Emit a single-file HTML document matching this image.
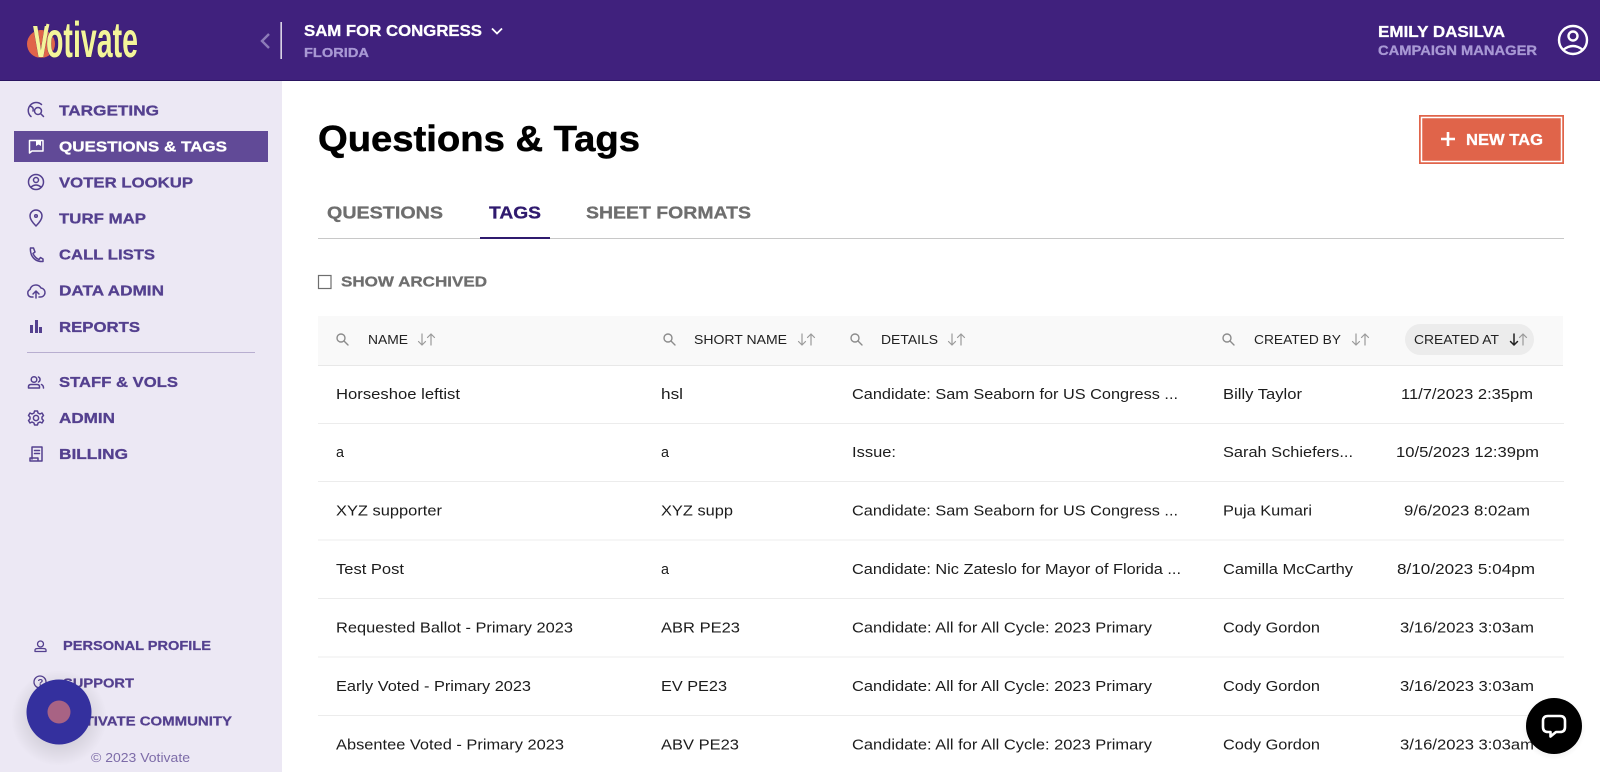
<!DOCTYPE html>
<html><head><meta charset="utf-8"><style>
html,body{margin:0;padding:0;width:1600px;height:772px;overflow:hidden;background:#fff}
svg{display:block}
text{font-family:"Liberation Sans",sans-serif;white-space:pre}
.n{font-size:15px;font-weight:700;fill:#54408f;stroke:#54408f;stroke-width:.3}
.f{font-size:13px;font-weight:700;fill:#54408f;stroke:#54408f;stroke-width:.25}
.t{font-size:15px;fill:#1c1c1c}
.h{font-size:13px;fill:#222}
.tab{font-size:17.5px;font-weight:700;fill:#6e6e6e;stroke:#6e6e6e;stroke-width:.3}
.ic{fill:none;stroke:#54408f;stroke-width:1.5;stroke-linecap:round;stroke-linejoin:round}
.s{fill:none;stroke:#8c8c8c;stroke-width:1.4;stroke-linecap:round}
.ar{fill:none;stroke:#9a9a9a;stroke-width:1.2;stroke-linecap:round;stroke-linejoin:round}
.l{stroke:#ececec;stroke-width:1}
</style></head><body>
<svg width="1600" height="772" viewBox="0 0 1600 772" xmlns="http://www.w3.org/2000/svg">
<defs><radialGradient id="g"><stop offset="55%" stop-color="#000" stop-opacity=".1"/><stop offset="100%" stop-color="#000" stop-opacity="0"/></radialGradient></defs>
<rect width="1600" height="772" fill="#fff"/>
<!-- sidebar -->
<rect x="0" y="80" width="282" height="692" fill="#ece8f4"/>
<!-- header -->
<rect width="1600" height="80" fill="#40217d"/>
<rect y="80" width="1600" height="1" fill="#2a1560"/>
<!-- logo -->
<circle cx="41" cy="44" r="14" fill="#e0644a"/>
<text x="33" y="57" font-size="58" font-weight="700" textLength="16" lengthAdjust="spacingAndGlyphs" style="fill:#f4f59a;stroke:#2a1560;stroke-width:.6;paint-order:stroke">v</text>
<path d="M46.500 30 L48 24" fill="none" stroke="#f4f59a" stroke-width="3"/>
<text x="46" y="57" font-size="50" font-weight="700" textLength="92" lengthAdjust="spacingAndGlyphs" style="fill:#f4f59a;stroke:#2a1560;stroke-width:.8;paint-order:stroke">otivate</text>
<!-- header left -->
<path d="M269 34 L262 41 L269 48" fill="none" stroke="#8d7bb8" stroke-width="2.400"/>
<rect x="280.500" y="22" width="1.300" height="37" fill="#fff"/>
<text x="304" y="36" font-size="15.500" font-weight="700" fill="#fff" stroke="#fff" stroke-width=".3" textLength="178" lengthAdjust="spacingAndGlyphs">SAM FOR CONGRESS</text>
<path d="M492 28.500 L497 33.500 L502 28.500" fill="none" stroke="#fff" stroke-width="1.800"/>
<text x="304" y="57" font-size="13" font-weight="700" fill="#a898d4" stroke="#a898d4" stroke-width=".3" textLength="65" lengthAdjust="spacingAndGlyphs">FLORIDA</text>
<!-- header right -->
<text x="1378" y="37" font-size="15.500" font-weight="700" fill="#fff" stroke="#fff" stroke-width=".3" textLength="127" lengthAdjust="spacingAndGlyphs">EMILY DASILVA</text>
<text x="1378" y="55" font-size="13.500" font-weight="700" fill="#a898d4" stroke="#a898d4" stroke-width=".3" textLength="159" lengthAdjust="spacingAndGlyphs">CAMPAIGN MANAGER</text>
<circle cx="1573" cy="40" r="14" fill="none" stroke="#fff" stroke-width="2.400"/>
<circle cx="1573" cy="36" r="4.500" fill="none" stroke="#fff" stroke-width="2.400"/>
<path d="M1563 50 Q1573 42 1583 50" fill="none" stroke="#fff" stroke-width="2.400"/>
<!-- nav -->
<rect x="14" y="131" width="254" height="31" fill="#614a97"/>
<g class="ic">
<path d="M41.500 104.500 A7.500 7.500 0 1 0 31 116.500 M30 106 Q34 107 33 111"/><circle cx="38" cy="111" r="3.500"/><path d="M40.500 113.500 L43.500 116.500"/>
<path d="M29.500 140.500 H43 V151 H32 L29.500 153 Z" style="stroke:#fff"/>
<circle cx="36" cy="182" r="7.500"/><circle cx="36" cy="180" r="2.500"/><path d="M31 187 Q36 183 41 187"/>
<path d="M36 226 Q30 220 30 216 A6 6 0 0 1 42 216 Q42 220 36 226 Z"/><circle cx="36" cy="216" r="1.300"/>
<path d="M30.500 248 L33.500 248 L35 252 L33 253.500 Q35 258 39 259.500 L40.500 257.500 L43 259 V261.500 Q35 262 31.500 255 Q30 251 30.500 248 Z"/>
<path d="M33 297 H31 A4 4 0 0 1 30 289.500 A6 6 0 0 1 41 288 A4.500 4.500 0 0 1 40 297 H39 M36 298 V291 M33 294 L36 291 L39 294"/>
<circle cx="34" cy="379.500" r="2.800"/><path d="M28.500 388 V386.500 Q28.500 384.500 31 384.500 H37 Q39.500 384.500 39.500 386.500 V388 Z M38.500 377 a2.800 2.800 0 0 1 0 5 M41.500 384.500 Q43.500 385.500 43.500 388"/>
<circle cx="36" cy="418" r="2.600"/><path d="M34.500 411 H37.500 L38 413 L40 414 L42 413 L43.500 415.500 L42 417 V419 L43.500 420.500 L42 423 L40 422 L38 423 L37.500 425 H34.500 L34 423 L32 422 L30 423 L28.500 420.500 L30 419 V417 L28.500 415.500 L30 413 L32 414 L34 413 Z"/>
<path d="M32 459 V447 H42 V461 H30 V458 H38 V461 M34.500 450.500 H39.500 M34.500 453.500 H39.500"/>
</g>
<path d="M36 140 H41 V146 L38.500 144.500 L36 146 Z" fill="#fff"/>
<rect x="30" y="325" width="3" height="8" fill="#54408f"/><rect x="35" y="320" width="3" height="13" fill="#54408f"/><rect x="39" y="327" width="3" height="6" fill="#54408f"/>
<text class="n" x="59" y="115.500" textLength="100" lengthAdjust="spacingAndGlyphs">TARGETING</text>
<text class="n" x="59" y="151.500" style="fill:#fff;stroke:#fff" textLength="168" lengthAdjust="spacingAndGlyphs">QUESTIONS &amp; TAGS</text>
<text class="n" x="59" y="187.500" textLength="134" lengthAdjust="spacingAndGlyphs">VOTER LOOKUP</text>
<text class="n" x="59" y="223.500" textLength="87" lengthAdjust="spacingAndGlyphs">TURF MAP</text>
<text class="n" x="59" y="259.500" textLength="96" lengthAdjust="spacingAndGlyphs">CALL LISTS</text>
<text class="n" x="59" y="295.500" textLength="105" lengthAdjust="spacingAndGlyphs">DATA ADMIN</text>
<text class="n" x="59" y="332" textLength="81" lengthAdjust="spacingAndGlyphs">REPORTS</text>
<rect x="27" y="352" width="228" height="1" fill="#b8aed0"/>
<text class="n" x="59" y="387" textLength="119" lengthAdjust="spacingAndGlyphs">STAFF &amp; VOLS</text>
<text class="n" x="59" y="423" textLength="56" lengthAdjust="spacingAndGlyphs">ADMIN</text>
<text class="n" x="59" y="459" textLength="69" lengthAdjust="spacingAndGlyphs">BILLING</text>
<!-- sidebar footer -->
<g class="ic" style="stroke-width:1.300"><circle cx="40.500" cy="644" r="3"/><path d="M35 651.500 V650 Q35 648.500 38 648.500 H43 Q46 648.500 46 650 V651.500 Z"/><circle cx="40" cy="682" r="6"/></g>
<text x="37.500" y="685.500" font-size="9.500" font-weight="700" fill="#54408f">?</text>
<text class="f" x="63" y="650" textLength="148" lengthAdjust="spacingAndGlyphs">PERSONAL PROFILE</text>
<text class="f" x="63" y="687.500" textLength="71" lengthAdjust="spacingAndGlyphs">SUPPORT</text>
<text class="f" x="63" y="725.500" textLength="169" lengthAdjust="spacingAndGlyphs">VOTIVATE COMMUNITY</text>
<text x="91" y="762" font-size="13" fill="#7d6ca8" textLength="99" lengthAdjust="spacingAndGlyphs">© 2023 Votivate</text>
<circle cx="59" cy="718" r="48" fill="url(#g)"/>
<circle cx="59" cy="712" r="32.500" fill="#34309e"/>
<circle cx="59" cy="712" r="11.500" fill="#a86384"/>
<!-- title -->
<text x="318" y="151" font-size="36" font-weight="700" fill="#000" stroke="#000" stroke-width=".5" textLength="322" lengthAdjust="spacingAndGlyphs">Questions &amp; Tags</text>
<!-- button -->
<rect x="1419" y="115" width="145" height="49" fill="#e0644a"/>
<rect x="1421.500" y="117.500" width="140" height="44" fill="none" stroke="#fff" stroke-width="1.500"/>
<path d="M1448 132 V146 M1441 139 H1455" stroke="#fff" stroke-width="2.600" fill="none"/>
<text x="1466" y="145" font-size="16" font-weight="700" fill="#fff" stroke="#fff" stroke-width=".3" textLength="77" lengthAdjust="spacingAndGlyphs">NEW TAG</text>
<!-- tabs -->
<text class="tab" x="327" y="218.500" textLength="116" lengthAdjust="spacingAndGlyphs">QUESTIONS</text>
<text class="tab" x="489" y="218.500" style="fill:#2f1a6e;stroke:#2f1a6e" textLength="52" lengthAdjust="spacingAndGlyphs">TAGS</text>
<text class="tab" x="586" y="218.500" textLength="165" lengthAdjust="spacingAndGlyphs">SHEET FORMATS</text>
<rect x="318" y="238" width="1246" height="1" fill="#c8c8c8"/>
<rect x="480" y="237" width="70" height="2" fill="#2f1a6e"/>
<!-- archived -->
<rect x="318.500" y="275.500" width="12.500" height="13" fill="none" stroke="#6e6e6e" stroke-width="1.200"/>
<text x="341" y="286.500" font-size="15" font-weight="700" fill="#6e6e6e" stroke="#6e6e6e" stroke-width=".3" textLength="146" lengthAdjust="spacingAndGlyphs">SHOW ARCHIVED</text>
<!-- table head -->
<rect x="318" y="316" width="1245" height="49" fill="#f9f9f9"/>
<rect x="318" y="365" width="1245" height="1" fill="#e8e8e8"/>
<rect x="1405" y="324" width="129" height="31" rx="15.500" fill="#ececec"/>
<g class="s">
<circle cx="341" cy="338" r="4"/><path d="M344 341 L348 345"/>
<circle cx="668" cy="338" r="4"/><path d="M671 341 L675 345"/>
<circle cx="855" cy="338" r="4"/><path d="M858 341 L862 345"/>
<circle cx="1227" cy="338" r="4"/><path d="M1230 341 L1234 345"/>
</g>
<g class="ar">
<path d="M422 334 V345 M418.500 341.500 L422 345 L425.500 341.500 M431 345 V334 M427.500 337.500 L431 334 L434.500 337.500"/>
<path d="M802 334 V345 M798.500 341.500 L802 345 L805.500 341.500 M811 345 V334 M807.500 337.500 L811 334 L814.500 337.500"/>
<path d="M952 334 V345 M948.500 341.500 L952 345 L955.500 341.500 M961 345 V334 M957.500 337.500 L961 334 L964.500 337.500"/>
<path d="M1356 334 V345 M1352.500 341.500 L1356 345 L1359.500 341.500 M1365 345 V334 M1361.500 337.500 L1365 334 L1368.500 337.500"/>
<path d="M1514 334 V345 M1510.500 341.500 L1514 345 L1517.500 341.500" style="stroke:#222;stroke-width:1.500"/>
<path d="M1523 345 V334 M1519.500 337.500 L1523 334 L1526.500 337.500"/>
</g>
<text class="h" x="368" y="344" textLength="40" lengthAdjust="spacingAndGlyphs">NAME</text>
<text class="h" x="694" y="344" textLength="93" lengthAdjust="spacingAndGlyphs">SHORT NAME</text>
<text class="h" x="881" y="344" textLength="57" lengthAdjust="spacingAndGlyphs">DETAILS</text>
<text class="h" x="1254" y="344" textLength="87" lengthAdjust="spacingAndGlyphs">CREATED BY</text>
<text class="h" x="1414" y="344" textLength="85" lengthAdjust="spacingAndGlyphs">CREATED AT</text>
<!-- row lines -->
<path class="l" d="M318 423.500 H1564 M318 481.500 H1564 M318 540 H1564 M318 598.500 H1564 M318 657 H1564 M318 715.500 H1564"/>
<!-- rows -->
<text class="t" x="336" y="399" textLength="124" lengthAdjust="spacingAndGlyphs">Horseshoe leftist</text>
<text class="t" x="661" y="399" textLength="22" lengthAdjust="spacingAndGlyphs">hsl</text>
<text class="t" x="852" y="399" textLength="326" lengthAdjust="spacingAndGlyphs">Candidate: Sam Seaborn for US Congress ...</text>
<text class="t" x="1223" y="399" textLength="79" lengthAdjust="spacingAndGlyphs">Billy Taylor</text>
<text class="t" x="1401" y="399" textLength="132" lengthAdjust="spacingAndGlyphs">11/7/2023 2:35pm</text>

<text class="t" x="336" y="457" textLength="8" lengthAdjust="spacingAndGlyphs">a</text>
<text class="t" x="661" y="457" textLength="8" lengthAdjust="spacingAndGlyphs">a</text>
<text class="t" x="852" y="457" textLength="44" lengthAdjust="spacingAndGlyphs">Issue:</text>
<text class="t" x="1223" y="457" textLength="130" lengthAdjust="spacingAndGlyphs">Sarah Schiefers...</text>
<text class="t" x="1396" y="457" textLength="143" lengthAdjust="spacingAndGlyphs">10/5/2023 12:39pm</text>

<text class="t" x="336" y="515.500" textLength="106" lengthAdjust="spacingAndGlyphs">XYZ supporter</text>
<text class="t" x="661" y="515.500" textLength="72" lengthAdjust="spacingAndGlyphs">XYZ supp</text>
<text class="t" x="852" y="515.500" textLength="326" lengthAdjust="spacingAndGlyphs">Candidate: Sam Seaborn for US Congress ...</text>
<text class="t" x="1223" y="515.500" textLength="89" lengthAdjust="spacingAndGlyphs">Puja Kumari</text>
<text class="t" x="1404" y="515.500" textLength="126" lengthAdjust="spacingAndGlyphs">9/6/2023 8:02am</text>

<text class="t" x="336" y="574" textLength="68" lengthAdjust="spacingAndGlyphs">Test Post</text>
<text class="t" x="661" y="574" textLength="8" lengthAdjust="spacingAndGlyphs">a</text>
<text class="t" x="852" y="574" textLength="329" lengthAdjust="spacingAndGlyphs">Candidate: Nic Zateslo for Mayor of Florida ...</text>
<text class="t" x="1223" y="574" textLength="130" lengthAdjust="spacingAndGlyphs">Camilla McCarthy</text>
<text class="t" x="1397" y="574" textLength="138" lengthAdjust="spacingAndGlyphs">8/10/2023 5:04pm</text>

<text class="t" x="336" y="632.500" textLength="237" lengthAdjust="spacingAndGlyphs">Requested Ballot - Primary 2023</text>
<text class="t" x="661" y="632.500" textLength="79" lengthAdjust="spacingAndGlyphs">ABR PE23</text>
<text class="t" x="852" y="632.500" textLength="300" lengthAdjust="spacingAndGlyphs">Candidate: All for All Cycle: 2023 Primary</text>
<text class="t" x="1223" y="632.500" textLength="97" lengthAdjust="spacingAndGlyphs">Cody Gordon</text>
<text class="t" x="1400" y="632.500" textLength="134" lengthAdjust="spacingAndGlyphs">3/16/2023 3:03am</text>

<text class="t" x="336" y="691" textLength="195" lengthAdjust="spacingAndGlyphs">Early Voted - Primary 2023</text>
<text class="t" x="661" y="691" textLength="66" lengthAdjust="spacingAndGlyphs">EV PE23</text>
<text class="t" x="852" y="691" textLength="300" lengthAdjust="spacingAndGlyphs">Candidate: All for All Cycle: 2023 Primary</text>
<text class="t" x="1223" y="691" textLength="97" lengthAdjust="spacingAndGlyphs">Cody Gordon</text>
<text class="t" x="1400" y="691" textLength="134" lengthAdjust="spacingAndGlyphs">3/16/2023 3:03am</text>

<text class="t" x="336" y="749.500" textLength="228" lengthAdjust="spacingAndGlyphs">Absentee Voted - Primary 2023</text>
<text class="t" x="661" y="749.500" textLength="78" lengthAdjust="spacingAndGlyphs">ABV PE23</text>
<text class="t" x="852" y="749.500" textLength="300" lengthAdjust="spacingAndGlyphs">Candidate: All for All Cycle: 2023 Primary</text>
<text class="t" x="1223" y="749.500" textLength="97" lengthAdjust="spacingAndGlyphs">Cody Gordon</text>
<text class="t" x="1400" y="749.500" textLength="134" lengthAdjust="spacingAndGlyphs">3/16/2023 3:03am</text>
<!-- chat -->
<circle cx="1554" cy="728" r="32" fill="url(#g)"/>
<circle cx="1554" cy="726" r="28" fill="#000"/>
<path d="M1548 716 H1560 Q1565 716 1565 721 V727 Q1565 732 1560 732 H1556 L1550.500 736.500 V732 H1548 Q1543 732 1543 727 V721 Q1543 716 1548 716 Z" fill="none" stroke="#fff" stroke-width="2.600" stroke-linejoin="round"/>
</svg>
</body></html>
